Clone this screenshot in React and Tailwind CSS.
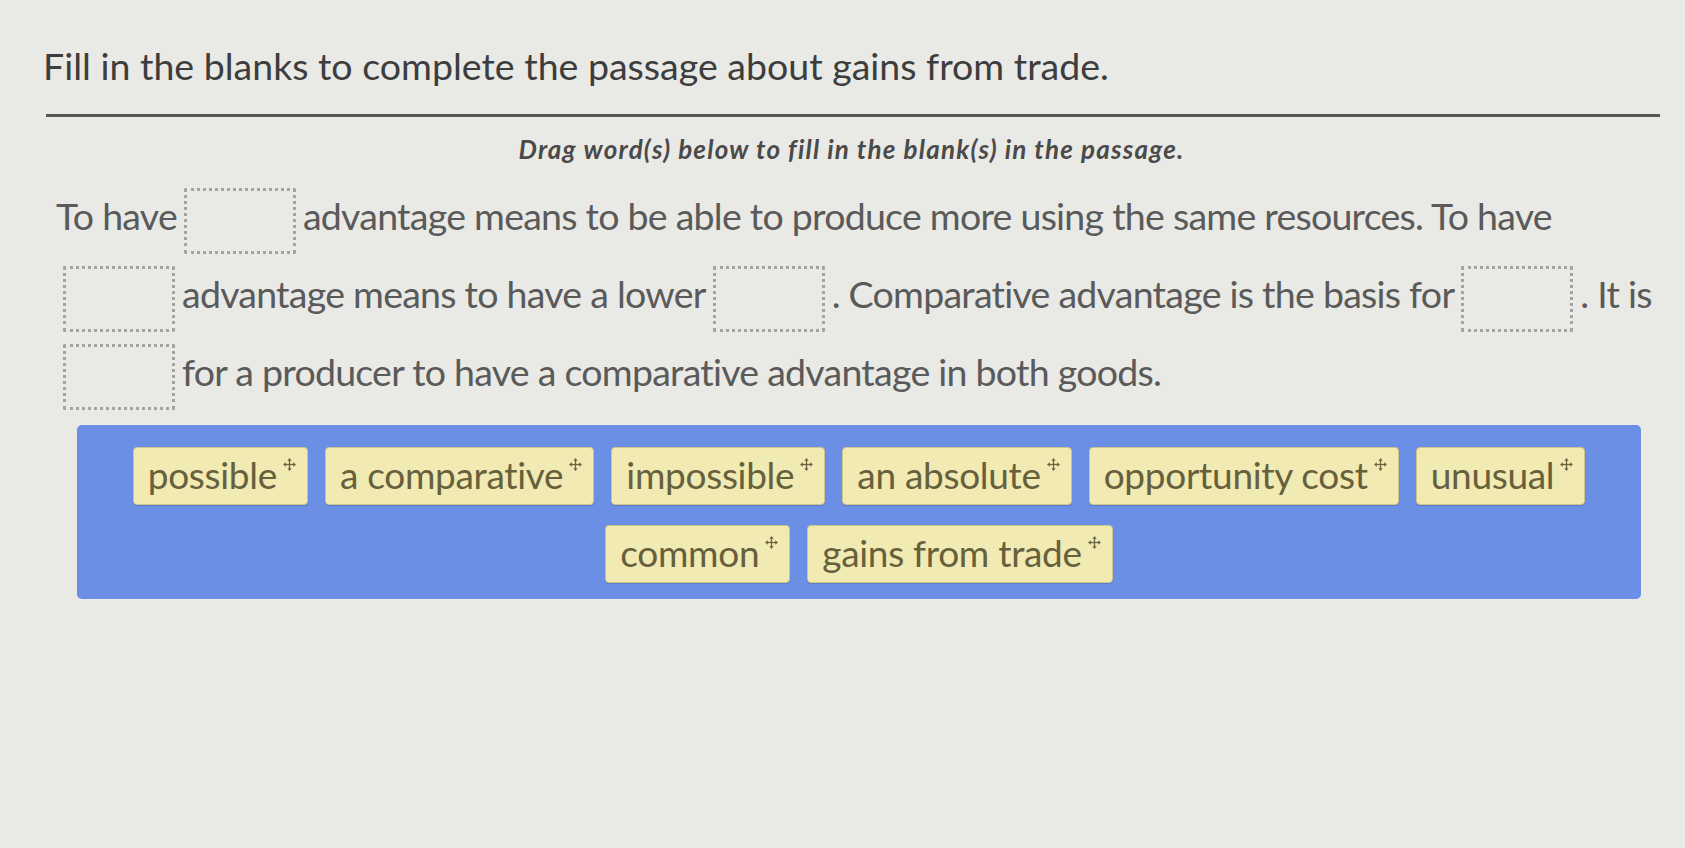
import React from "react";

function MoveIcon() {
  return (
    <svg width="13" height="13" viewBox="0 0 14 14" className="shrink-0 self-start mt-[3px] ml-[6px]" fill="#6b6542">
      <rect x="6.3" y="2" width="1.4" height="10" />
      <rect x="2" y="6.3" width="10" height="1.4" />
      <path d="M7 0 L9.3 3 L4.7 3 Z" />
      <path d="M7 14 L9.3 11 L4.7 11 Z" />
      <path d="M0 7 L3 4.7 L3 9.3 Z" />
      <path d="M14 7 L11 4.7 L11 9.3 Z" />
    </svg>
  );
}

function Tile({ children }) {
  return (
    <div className="flex items-start h-[58px] pl-[14px] pr-[11px] pt-[7px] bg-[#f1eab3] border border-[#cfc58a] rounded-[4px] shadow-[0_1px_1px_rgba(0,0,0,0.15)]">
      <span className="text-[37px] leading-[40px] text-[#66603c] tracking-[-0.3px]">{children}</span>
      <MoveIcon />
    </div>
  );
}

function Blank() {
  return (
    <span className="inline-block align-middle w-[112px] h-[66px] border-[3px] border-dotted border-[#a3a3a3] mx-[7px] rounded-[2px]" />
  );
}

export default function App() {
  return (
    <div className="min-h-screen w-full bg-[#e9e9e5] font-['Lato',sans-serif] pt-[42px] pl-[43px] pr-[25px]">
      <h1 className="text-[37.5px] leading-[48px] text-[#3d3d3d]">
        Fill in the blanks to complete the passage about gains from trade.
      </h1>
      <div className="mt-[24px] ml-[3px] h-[3px] bg-[#545752]" />
      <p className="mt-[16px] text-center text-[26px] leading-[32px] font-bold italic text-[#4a4a4a] tracking-[1.2px]">
        Drag word(s) below to fill in the blank(s) in the passage.
      </p>
      <div className="mt-[12px] pl-[13px] text-[37.5px] leading-[78px] text-[#5a5a5a] tracking-[-0.75px]">
        To have<Blank />advantage means to be able to produce more using the same resources. To have <Blank />advantage means to have a lower<Blank />. Comparative advantage is the basis for<Blank /><span className="whitespace-nowrap">. It is</span> <Blank />for a producer to have a comparative advantage in both goods.
      </div>
      <div className="mt-[14px] ml-[34px] mr-[19px] bg-[#6a8fe5] rounded-[5px] pt-[22px] pb-[16px] px-[20px] flex flex-wrap justify-center gap-x-[17px] gap-y-[20px]">
        <Tile>possible</Tile>
        <Tile>a comparative</Tile>
        <Tile>impossible</Tile>
        <Tile>an absolute</Tile>
        <Tile>opportunity cost</Tile>
        <Tile>unusual</Tile>
        <Tile>common</Tile>
        <Tile>gains from trade</Tile>
      </div>
    </div>
  );
}
